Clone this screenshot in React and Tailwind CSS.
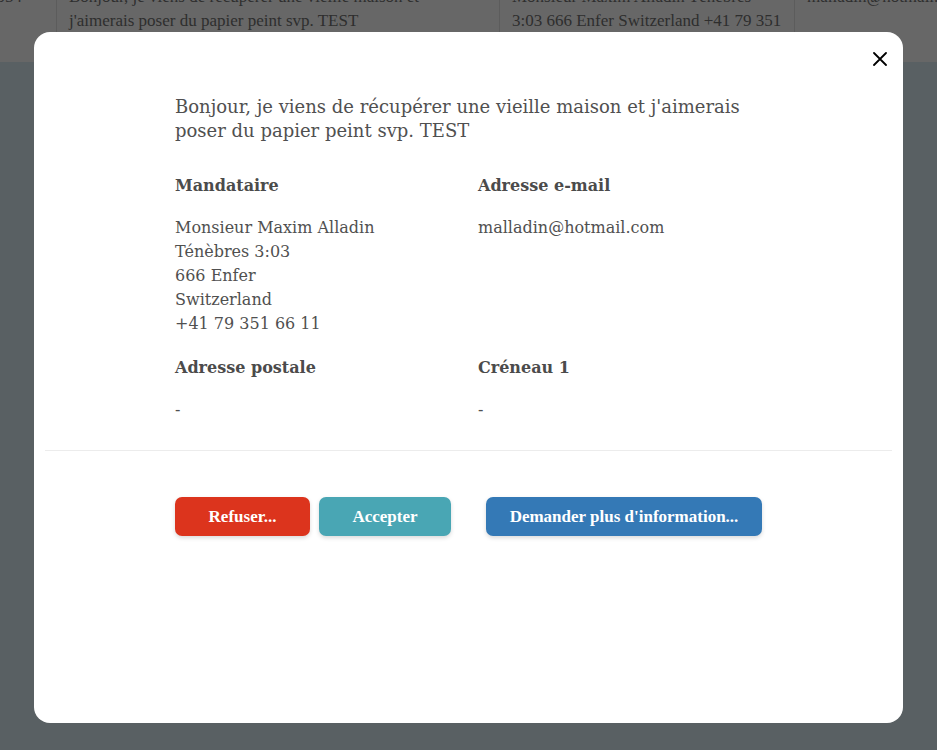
import React from "react";

const Field = ({ label, children }) => (
  <div>
    <div className="font-bold text-[#4b4b4b] leading-6">{label}</div>
    <div className="mt-[18px] leading-6">{children}</div>
  </div>
);

const App = () => {
  return (
    <div className="relative h-[750px] w-full overflow-hidden bg-[#596063] font-['DejaVu_Serif',serif]">
      {/* page behind the overlay */}
      <div className="flex h-[62px] bg-[#676767] text-[17px] leading-[24px] text-[#2e2e2e] font-['Liberation_Serif',serif]">
        <div className="w-[57px] border-r border-[#5c5c5c] -mt-[15px] overflow-hidden">
          <div className="-ml-[12px]">4054</div>
        </div>
        <div className="w-[443px] border-r border-[#5c5c5c] -mt-[15px] pl-[12px]">
          <div>Bonjour, je viens de récupérer une vieille maison et</div>
          <div>j'aimerais poser du papier peint svp. TEST</div>
        </div>
        <div className="w-[295px] border-r border-[#5c5c5c] -mt-[15px] pl-[12px] whitespace-nowrap overflow-hidden">
          <div>Monsieur Maxim Alladin Ténèbres</div>
          <div>3:03 666 Enfer Switzerland +41 79 351</div>
        </div>
        <div className="flex-1 -mt-[15px] pl-[12px] whitespace-nowrap overflow-hidden">
          <div>malladin@hotmail.com</div>
        </div>
      </div>

      {/* modal */}
      <div className="absolute left-[34px] top-[32px] h-[691px] w-[869px] rounded-2xl bg-white">
        <button className="absolute right-[16px] top-[20px] flex h-[14px] w-[14px] items-center justify-center text-black">
          <svg width="14" height="14" viewBox="0 0 14 14" fill="none" stroke="currentColor" strokeWidth="1.8" strokeLinecap="round">
            <path d="M1 1L13 13M13 1L1 13" />
          </svg>
        </button>

        <div className="pl-[141px] pr-[100px] pt-[63px] text-[16px] text-[#505050]">
          <p className="leading-6 text-[18px] whitespace-nowrap">
            Bonjour, je viens de récupérer une vieille maison et j'aimerais
            <br />
            poser du papier peint svp. TEST
          </p>

          <div className="mt-[31px] grid grid-cols-[303px_1fr] gap-y-[20px]">
            <Field label="Mandataire">
              <div>Monsieur Maxim Alladin</div>
              <div>Ténèbres 3:03</div>
              <div>666 Enfer</div>
              <div>Switzerland</div>
              <div>+41 79 351 66 11</div>
            </Field>
            <Field label="Adresse e-mail">
              <div>malladin@hotmail.com</div>
            </Field>
            <Field label="Adresse postale">
              <div>-</div>
            </Field>
            <Field label="Créneau 1">
              <div>-</div>
            </Field>
          </div>
        </div>

        <div className="mx-[11px] mt-[28px] border-t border-[#ececec]" />

        <div className="mt-[46px] flex pl-[141px] text-[17px] font-bold text-white font-['Liberation_Serif',serif]">
          <button className="h-[39px] w-[135px] rounded-[7px] bg-[#dc341d] shadow-[0_2px_4px_rgba(0,0,0,0.15)]">
            Refuser...
          </button>
          <button className="ml-[9px] h-[39px] w-[132px] rounded-[7px] bg-[#49a6b4] shadow-[0_2px_4px_rgba(0,0,0,0.15)]">
            Accepter
          </button>
          <button className="ml-[35px] h-[39px] w-[276px] rounded-[7px] bg-[#3479b6] shadow-[0_2px_4px_rgba(0,0,0,0.15)]">
            Demander plus d'information...
          </button>
        </div>
      </div>
    </div>
  );
};

export default App;
